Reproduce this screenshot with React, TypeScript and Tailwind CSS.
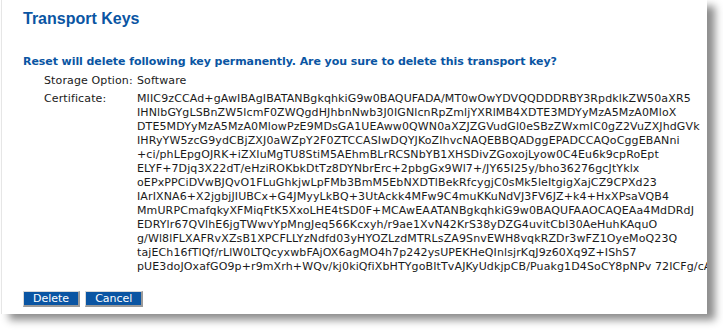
import React from "react";

const certLines = [
  "MIIC9zCCAd+gAwIBAgIBATANBgkqhkiG9w0BAQUFADA/MT0wOwYDVQQDDDRBY3RpdklkZW50aXR5",
  "IHNlbGYgLSBnZW5lcmF0ZWQgdHJhbnNwb3J0IGNlcnRpZmljYXRlMB4XDTE3MDYyMzA5MzA0MloX",
  "DTE5MDYyMzA5MzA0MlowPzE9MDsGA1UEAww0QWN0aXZJZGVudGl0eSBzZWxmIC0gZ2VuZXJhdGVk",
  "IHRyYW5zcG9ydCBjZXJ0aWZpY2F0ZTCCASIwDQYJKoZIhvcNAQEBBQADggEPADCCAQoCggEBANni",
  "+ci/phLEpgOJRK+iZXIuMgTU8StiM5AEhmBLrRCSNbYB1XHSDivZGoxojLyow0C4Eu6k9cpRoEpt",
  "ELYF+7Djq3X22dT/eHziROKbkDtTz8DYNbrErc+2pbgGx9Wl7+/JY65I25y/bho36276gcJtYklx",
  "oEPxPPCiDVwBJQvO1FLuGhkjwLpFMb3BmM5EbNXDTlBekRfcygjC0sMk5leItgigXajCZ9CPXd23",
  "IArIXNA6+X2jgbjJIUBCx+G4JMyyLkBQ+3UtAckk4MFw9C4muKKuNdVJ3FV6JZ+k4+HxXPsaVQB4",
  "MmURPCmafqkyXFMiqFtK5XxoLHE4tSD0F+MCAwEAATANBgkqhkiG9w0BAQUFAAOCAQEAa4MdDRdJ",
  "EDRYlr67QVlhE6jgTWwvYpMngJeq566Kcxyh/r9ae1XvN42KrS38yDZG4uvitCbI30AeHuhKAquO",
  "g/Wl8lFLXAFRvXZsB1XPCFLLYzNdfd03yHYOZLzdMTRLsZA9SnvEWH8vqkRZDr3wFZ1OyeMoQ23Q",
  "tajECh16fTlQf/rLlW0LTQcyxwbFAjOX6agMO4h7p242ysUPEKHeQInlsjrKqJ9z60Xq9Z+IShS7",
  "pUE3doJOxafGO9p+r9mXrh+WQv/kj0kiQfiXbHTYgoBItTvAJKyUdkjpCB/Puakg1D4SoCY8pNPv 72ICFg/cA",
];

function Button({ label }: { label: string }) {
  return (
    <button className="h-[16px] px-[9px] bg-[#0a55a3] text-white text-[11px] leading-[12px] border border-t-[#d8d8d8] border-l-[#d8d8d8] border-r-[#9a9a9a] border-b-[#9a9a9a] border-r-2 border-b-2">
      {label}
    </button>
  );
}

export default function App() {
  return (
    <div className="w-[723px] h-[330px] bg-white overflow-hidden font-['DejaVu_Sans',Verdana,sans-serif]">
      <div className="ml-px w-[706px] h-[314px] bg-white overflow-hidden border-l border-[#e6e6e6] shadow-[8px_6px_8px_rgba(0,0,0,0.45)] pl-[21px]">
        <h1 className="pt-[9px] text-[16px] leading-[20px] font-bold text-[#0a55a3] font-['Liberation_Sans',Arial,sans-serif]">
          Transport Keys
        </h1>

        <p className="mt-[26px] text-[11px] leading-[14px] font-bold text-[#0a55a3] whitespace-nowrap tracking-[-0.07px]">
          Reset will delete following key permanently. Are you sure to delete this transport key?
        </p>

        <div className="mt-[5px] pl-[21px] text-[11px] leading-[14px] text-[#1a1a1a] tracking-[0.12px]">
          <div className="flex">
            <div className="w-[93px] shrink-0">Storage Option:</div>
            <div>Software</div>
          </div>
          <div className="flex mt-[4px]">
            <div className="w-[93px] shrink-0">Certificate:</div>
            <div className="flex flex-col whitespace-nowrap">
              {certLines.map((line, i) => (
                <div key={i}>{line}</div>
              ))}
            </div>
          </div>
        </div>

        <div className="mt-[17px] flex gap-[5px]">
          <Button label="Delete" />
          <Button label="Cancel" />
        </div>
      </div>
    </div>
  );
}
